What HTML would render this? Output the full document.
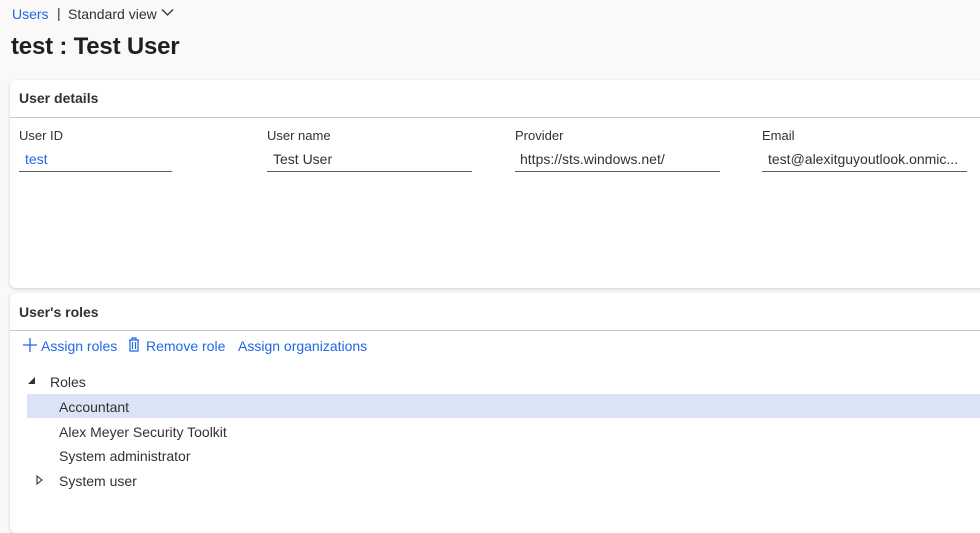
<!DOCTYPE html>
<html><head><style>
body{margin:0;width:980px;height:517px;background:#faf9f8;font-family:"Liberation Sans",sans-serif;color:#323130;position:relative;overflow:hidden;font-size:14px}
.a{position:absolute;white-space:nowrap}
.card{position:absolute;left:10px;width:990px;background:#fff;border-radius:6px;box-shadow:0 1px 3px rgba(0,0,0,.18)}
.lbl{font-size:13px;color:#323130;top:128px}
.val{top:151px;font-size:14px}
.ul{position:absolute;top:171px;height:1px;background:#605e5c}
.blue{color:#2266e3}
.row{position:absolute;left:27px;width:960px;height:24px}
</style></head><body>
<div class="a blue" style="left:12px;top:6px;font-size:14px">Users</div>
<div class="a" style="left:57px;top:5px;font-size:14px">|</div>
<div class="a" style="left:68px;top:6px;font-size:14px">Standard view</div>
<svg class="a" style="left:161px;top:8px" width="13" height="9"><path d="M1 1.5 L6.5 7 L12 1.5" fill="none" stroke="#323130" stroke-width="1.3"/></svg>
<div class="a" style="left:11px;top:33px;font-size:24px;font-weight:bold;color:#201f1e;letter-spacing:-0.2px">test : Test User</div>

<div class="card" style="top:80px;height:208px"></div>
<div class="a" style="left:19px;top:90px;font-size:14px;font-weight:600;color:#323130">User details</div>
<div class="a" style="left:10px;top:117px;width:980px;height:1px;background:#c8c6c4"></div>
<div class="a lbl" style="left:19px">User ID</div>
<div class="a lbl" style="left:267px">User name</div>
<div class="a lbl" style="left:515px">Provider</div>
<div class="a lbl" style="left:762px">Email</div>
<div class="a val blue" style="left:25px">test</div>
<div class="a val" style="left:273px">Test User</div>
<div class="a val" style="left:520px">https://sts.windows.net/</div>
<div class="a val" style="left:768px">test@alexitguyoutlook.onmic...</div>
<div class="ul" style="left:19px;width:153px"></div>
<div class="ul" style="left:267px;width:205px"></div>
<div class="ul" style="left:515px;width:205px"></div>
<div class="ul" style="left:762px;width:205px"></div>

<div class="card" style="top:293px;height:240px"></div>
<div class="a" style="left:19px;top:304px;font-size:14px;font-weight:600">User's roles</div>
<div class="a" style="left:10px;top:330px;width:980px;height:1px;background:#c8c6c4"></div>
<svg class="a" style="left:23px;top:338px" width="14" height="14"><path d="M7 0V14M0 7H14" stroke="#2266e3" stroke-width="1.3"/></svg>
<div class="a blue" style="left:41px;top:338px">Assign roles</div>
<svg class="a" style="left:128px;top:337px" width="12" height="15"><path d="M1 3H11M4 3V1H8V3M2 3V14H10V3M4.5 5V12M7.5 5V12" fill="none" stroke="#2266e3" stroke-width="1.2"/></svg>
<div class="a blue" style="left:146px;top:338px">Remove role</div>
<div class="a blue" style="left:238px;top:338px">Assign organizations</div>
<svg class="a" style="left:28px;top:377px" width="8" height="8"><path d="M7 0V7H0Z" fill="#323130"/></svg>
<div class="a" style="left:50px;top:374px">Roles</div>
<div class="row" style="top:394px;background:#dae4f6"></div>
<div class="a" style="left:59px;top:399px">Accountant</div>
<div class="a" style="left:59px;top:424px">Alex Meyer Security Toolkit</div>
<div class="a" style="left:59px;top:448px">System administrator</div>
<svg class="a" style="left:36px;top:475px" width="7" height="10"><path d="M1 1L6 5L1 9Z" fill="none" stroke="#323130" stroke-width="1.1"/></svg>
<div class="a" style="left:59px;top:473px">System user</div>
</body></html>
